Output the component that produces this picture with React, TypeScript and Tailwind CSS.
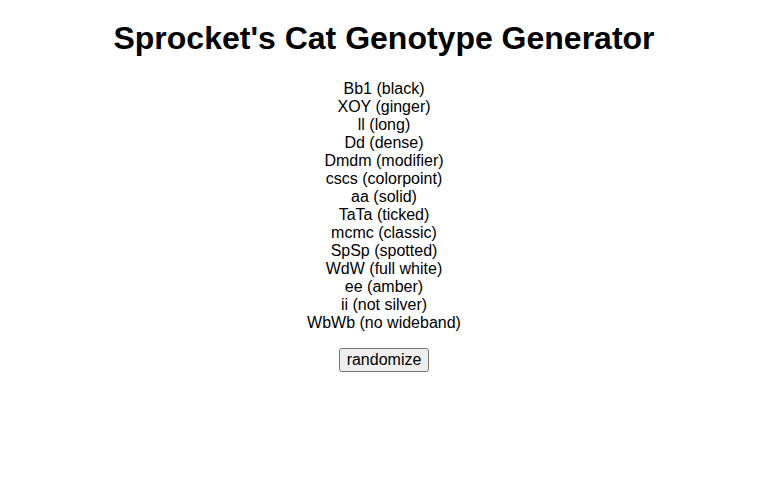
import React, { useState } from 'react';

type Gene = { code: string; label: string };

const genes: Gene[] = [
  { code: 'Bb1', label: 'black' },
  { code: 'XOY', label: 'ginger' },
  { code: 'll', label: 'long' },
  { code: 'Dd', label: 'dense' },
  { code: 'Dmdm', label: 'modifier' },
  { code: 'cscs', label: 'colorpoint' },
  { code: 'aa', label: 'solid' },
  { code: 'TaTa', label: 'ticked' },
  { code: 'mcmc', label: 'classic' },
  { code: 'SpSp', label: 'spotted' },
  { code: 'WdW', label: 'full white' },
  { code: 'ee', label: 'amber' },
  { code: 'ii', label: 'not silver' },
  { code: 'WbWb', label: 'no wideband' },
];

export default function App() {
  const [genotype, setGenotype] = useState<Gene[]>(genes);

  const randomize = () => {
    setGenotype([...genes]);
  };

  return (
    <div className="min-h-screen bg-white text-black text-center font-['Liberation_Sans',Arial,sans-serif] text-[16px]">
      <h1 className="text-[32px] font-bold leading-[37px] pt-[20px] mb-[23px]">
        Sprocket's Cat Genotype Generator
      </h1>
      <div className="leading-[18px]">
        {genotype.map((gene) => (
          <div key={gene.code}>
            {gene.code} ({gene.label})
          </div>
        ))}
      </div>
      <button
        onClick={randomize}
        className="mt-[16px] h-[24px] w-[90px] bg-[#efefef] border border-[#767676] rounded-[3px] text-[16px] leading-[18px] hover:bg-[#e5e5e5]"
      >
        randomize
      </button>
    </div>
  );
}
